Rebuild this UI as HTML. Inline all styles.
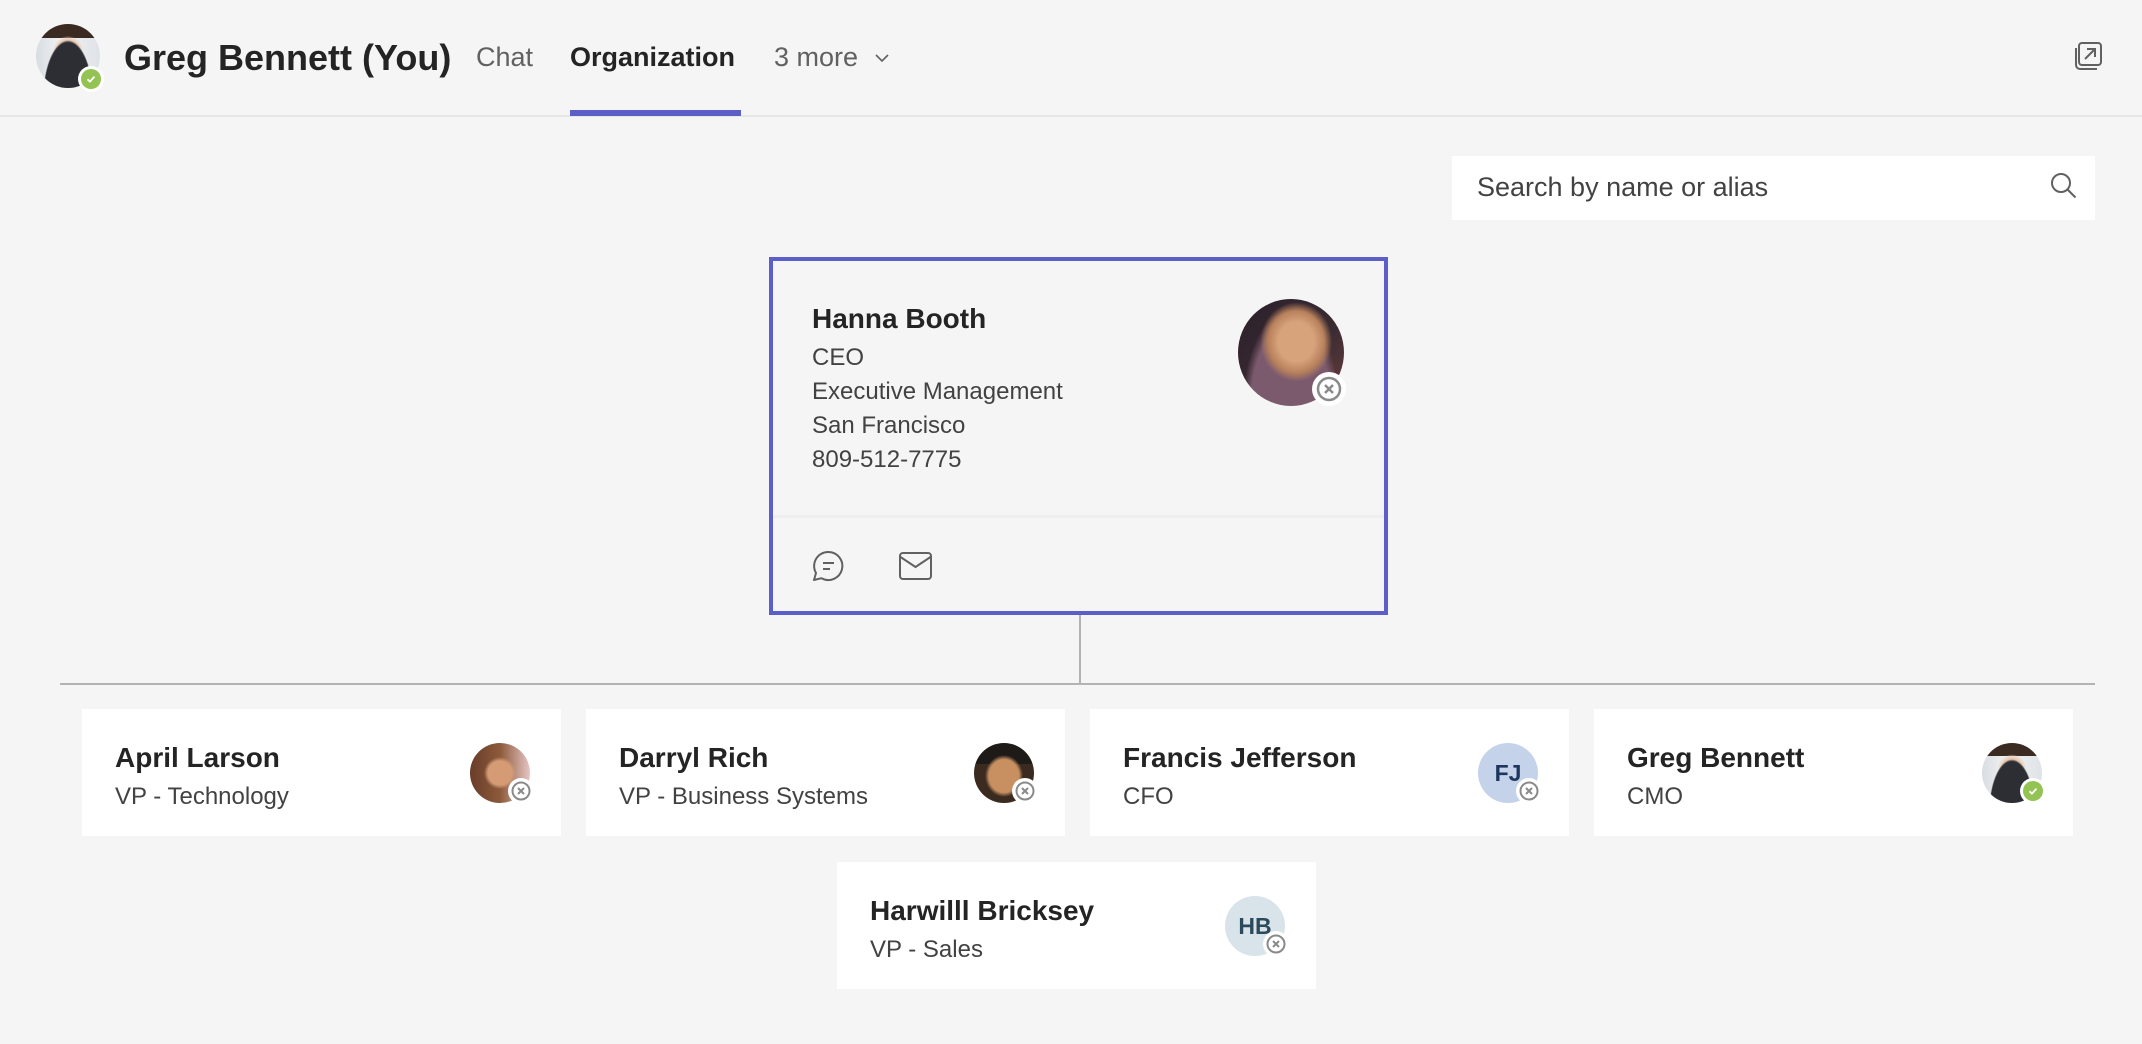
<!DOCTYPE html>
<html><head><meta charset="utf-8">
<style>
*{box-sizing:border-box;margin:0;padding:0}
body{width:2142px;height:1044px;background:#f5f5f5;font-family:"Liberation Sans",sans-serif;color:#242424;position:relative;overflow:hidden}
.abs{position:absolute}
.hdr{left:0;top:0;width:2142px;height:117px;border-bottom:2px solid #e6e6e6}
.av{position:absolute;border-radius:50%;overflow:visible}
.av .in{position:absolute;inset:0;border-radius:50%;overflow:hidden}
.badge{position:absolute;border-radius:50%;background:#fff;display:flex;align-items:center;justify-content:center}
.ok{background:#92c353;border-radius:50%}
.card{position:absolute;background:#fff;width:479px;height:127px}
.card .n{position:absolute;left:33px;top:33px;font-size:28px;font-weight:bold;color:#242424}
.card .s{position:absolute;left:33px;top:74px;font-size:24px;color:#424242}
.ini{display:flex;align-items:center;justify-content:center;font-size:23px;font-weight:bold}
</style></head><body>
<div class="abs hdr"></div>
<div class="av" style="left:36px;top:24px;width:64px;height:64px">
 <div class="in" style="background:radial-gradient(ellipse at 50% 115%,#2c2e33 0 24px,transparent 25px),radial-gradient(circle at 50% 42%,#e9c9b5 0 11px,transparent 15px),linear-gradient(#3a2a22 0 22%,transparent 22%),linear-gradient(90deg,#d8dde3,#f1f1f1 40%,#dfe3e8);"></div>
 <div class="badge" style="left:42px;top:42px;width:26px;height:26px"><div class="ok" style="width:20px;height:20px;display:flex;align-items:center;justify-content:center"><svg width="12" height="12" viewBox="0 0 12 12"><path d="M2.5 6.3l2.4 2.3 4.6-5" stroke="#fff" stroke-width="1.8" fill="none"/></svg></div></div>
</div>
<div class="abs" style="left:124px;top:37px;font-size:36px;font-weight:bold;color:#242424">Greg Bennett (You)</div>
<div class="abs" style="left:476px;top:42px;font-size:27px;color:#616161">Chat</div>
<div class="abs" style="left:570px;top:42px;font-size:27px;font-weight:bold;color:#242424">Organization</div>
<div class="abs" style="left:570px;top:110px;width:171px;height:6px;background:#5b5fc7"></div>
<div class="abs" style="left:774px;top:42px;font-size:27px;color:#616161">3 more</div>
<svg class="abs" style="left:874px;top:52px" width="16" height="12" viewBox="0 0 16 12"><path d="M2 3l6 6 6-6" stroke="#616161" stroke-width="1.6" fill="none"/></svg>
<svg class="abs" style="left:2073px;top:41px" width="30" height="30" viewBox="0 0 30 30"><rect x="6" y="2" width="22" height="22" rx="3" stroke="#616161" stroke-width="2" fill="none"/><path d="M3 7v17a4 4 0 0 0 4 4h17" stroke="#616161" stroke-width="2" fill="none"/><path d="M12 18l10-10M14 8h8v8" stroke="#616161" stroke-width="2" fill="none"/></svg>
<div class="abs" style="left:1452px;top:156px;width:643px;height:64px;background:#fff"></div>
<div class="abs" style="left:1477px;top:172px;font-size:27px;color:#424242">Search by name or alias</div>
<svg class="abs" style="left:2049px;top:171px" width="30" height="30" viewBox="0 0 30 30"><circle cx="12" cy="12" r="9" stroke="#616161" stroke-width="2" fill="none"/><path d="M18.5 18.5l8 8" stroke="#616161" stroke-width="2"/></svg>
<div class="abs" style="left:769px;top:257px;width:619px;height:358px;border:4px solid #5b5fc7;background:#f5f5f5"></div>
<div class="abs" style="left:773px;top:515px;width:611px;height:3px;background:#eeeeee"></div>
<div class="abs" style="left:812px;top:303px;font-size:28px;font-weight:bold">Hanna Booth</div>
<div class="abs" style="left:812px;top:341px;font-size:24px;color:#424242;line-height:34px">CEO<br>Executive Management<br>San Francisco<br>809-512-7775</div>
<div class="av" style="left:1238px;top:299px;width:106px;height:107px">
 <div class="in" style="background:radial-gradient(ellipse at 55% 40%,#d7a37b 0 18px,#b8815c 28px,transparent 36px),radial-gradient(ellipse at 50% 100%,#7c5a6e 0 40px,transparent 48px),linear-gradient(135deg,#2a1f2a,#3b2c33 60%,#6d3f3c)"></div>
 <div class="badge" style="left:74px;top:73px;width:34px;height:34px"><svg width="28" height="28" viewBox="0 0 28 28"><circle cx="14" cy="14" r="11" stroke="#8a8a8a" stroke-width="2.5" fill="#fff"/><path d="M10 10l8 8M18 10l-8 8" stroke="#8a8a8a" stroke-width="2.5"/></svg></div>
</div>
<svg class="abs" style="left:811px;top:549px" width="35" height="35" viewBox="0 0 35 35"><path d="M17.5 3a14 14 0 1 1-7 26.2L3 31l2-7A14 14 0 0 1 17.5 3z" stroke="#616161" stroke-width="2" fill="none" stroke-linejoin="round"/><path d="M12 14h11M12 20h7" stroke="#616161" stroke-width="2"/></svg>
<svg class="abs" style="left:898px;top:551px" width="35" height="30" viewBox="0 0 35 30"><rect x="2" y="2" width="31" height="26" rx="3" stroke="#616161" stroke-width="2" fill="none"/><path d="M2.5 6l15 10 15-10" stroke="#616161" stroke-width="2" fill="none"/></svg>
<div class="abs" style="left:1079px;top:615px;width:2px;height:69px;background:#b3b3b3"></div>
<div class="abs" style="left:60px;top:683px;width:2035px;height:2px;background:#b3b3b3"></div>
<div class="card" style="left:82px;top:709px"><div class="n">April Larson</div><div class="s">VP - Technology</div>
 <div class="av" style="left:388px;top:34px;width:60px;height:60px"><div class="in" style="background:radial-gradient(ellipse at 50% 50%,#d59b75 0 12px,transparent 16px),linear-gradient(90deg,#6a3d2a,#8c5a3a 50%,#e7c5c5)"></div>
 <div class="badge" style="left:38px;top:35px;width:26px;height:26px"><svg width="22" height="22" viewBox="0 0 22 22"><circle cx="11" cy="11" r="8.5" stroke="#8a8a8a" stroke-width="2" fill="#fff"/><path d="M8 8l6 6M14 8l-6 6" stroke="#8a8a8a" stroke-width="2"/></svg></div></div></div>
<div class="card" style="left:586px;top:709px"><div class="n">Darryl Rich</div><div class="s">VP - Business Systems</div>
 <div class="av" style="left:388px;top:34px;width:60px;height:60px"><div class="in" style="background:radial-gradient(ellipse at 50% 55%,#c89060 0 15px,transparent 19px),linear-gradient(#1d1a18 0 35%,#3a2a20 35%),linear-gradient(90deg,#d9b679,#333)"></div>
 <div class="badge" style="left:38px;top:35px;width:26px;height:26px"><svg width="22" height="22" viewBox="0 0 22 22"><circle cx="11" cy="11" r="8.5" stroke="#8a8a8a" stroke-width="2" fill="#fff"/><path d="M8 8l6 6M14 8l-6 6" stroke="#8a8a8a" stroke-width="2"/></svg></div></div></div>
<div class="card" style="left:1090px;top:709px"><div class="n">Francis Jefferson</div><div class="s">CFO</div>
 <div class="av" style="left:388px;top:34px;width:60px;height:60px"><div class="in ini" style="background:#c5d3ea;color:#1e355e">FJ</div>
 <div class="badge" style="left:38px;top:35px;width:26px;height:26px"><svg width="22" height="22" viewBox="0 0 22 22"><circle cx="11" cy="11" r="8.5" stroke="#8a8a8a" stroke-width="2" fill="#fff"/><path d="M8 8l6 6M14 8l-6 6" stroke="#8a8a8a" stroke-width="2"/></svg></div></div></div>
<div class="card" style="left:1594px;top:709px"><div class="n">Greg Bennett</div><div class="s">CMO</div>
 <div class="av" style="left:388px;top:34px;width:60px;height:60px"><div class="in" style="background:radial-gradient(ellipse at 50% 115%,#2c2e33 0 22px,transparent 23px),radial-gradient(circle at 50% 42%,#e9c9b5 0 10px,transparent 14px),linear-gradient(#3a2a22 0 22%,transparent 22%),linear-gradient(90deg,#d8dde3,#f1f1f1 40%,#dfe3e8)"></div>
 <div class="badge" style="left:38px;top:35px;width:26px;height:26px"><div class="ok" style="width:20px;height:20px;display:flex;align-items:center;justify-content:center"><svg width="12" height="12" viewBox="0 0 12 12"><path d="M2.5 6.3l2.4 2.3 4.6-5" stroke="#fff" stroke-width="1.8" fill="none"/></svg></div></div></div></div>
<div class="card" style="left:837px;top:862px"><div class="n">Harwilll Bricksey</div><div class="s">VP - Sales</div>
 <div class="av" style="left:388px;top:34px;width:60px;height:60px"><div class="in ini" style="background:#d9e3ea;color:#2c4a5c">HB</div>
 <div class="badge" style="left:38px;top:35px;width:26px;height:26px"><svg width="22" height="22" viewBox="0 0 22 22"><circle cx="11" cy="11" r="8.5" stroke="#8a8a8a" stroke-width="2" fill="#fff"/><path d="M8 8l6 6M14 8l-6 6" stroke="#8a8a8a" stroke-width="2"/></svg></div></div></div>
</body></html>
